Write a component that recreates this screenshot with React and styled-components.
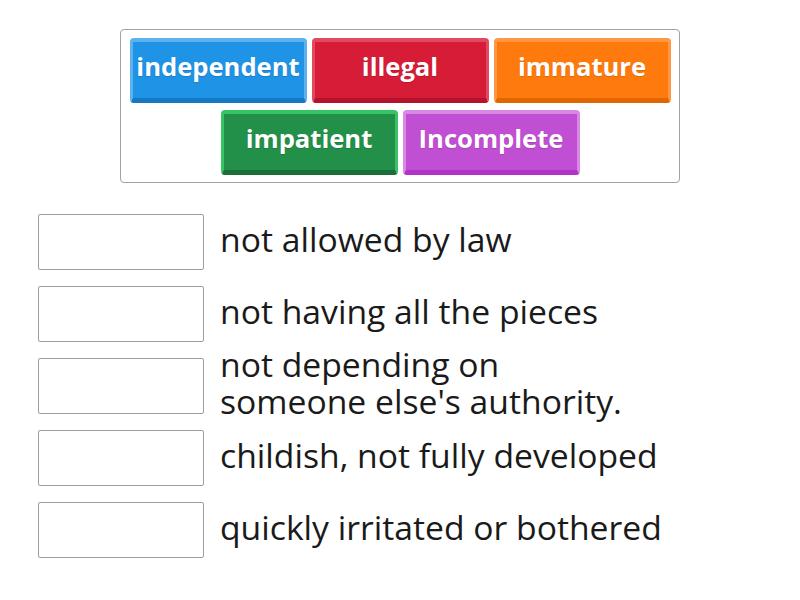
import React from "react";
import styled, { createGlobalStyle } from "styled-components";

const GlobalStyle = createGlobalStyle`
  html, body {
    margin: 0;
    padding: 0;
    background: #ffffff;
    font-family: "Open Sans", "Liberation Sans", sans-serif;
  }
`;

const Page = styled.div`
  width: 800px;
  height: 600px;
  padding-top: 29px;
  box-sizing: border-box;
`;

const Bank = styled.div`
  width: 560px;
  margin-left: 120px;
  box-sizing: border-box;
  border: 1px solid #a3a3a3;
  border-radius: 4px;
  padding: 8px 8px 7px 8px;
  display: flex;
  flex-direction: column;
  align-items: center;
  gap: 7px;
`;

const TileRow = styled.div`
  display: flex;
  gap: 5px;
`;

const Tile = styled.div`
  width: 177px;
  height: 65px;
  box-sizing: border-box;
  border-radius: 4px;
  background: ${({ $c }) => $c.main};
  border: 3px solid ${({ $c }) => $c.light};
  border-top-width: 4px;
  border-bottom: 5px solid ${({ $c }) => $c.dark};
  padding-bottom: 8px;
  color: #ffffff;
  font-weight: 700;
  font-size: 25.6px;
  display: flex;
  align-items: center;
  justify-content: center;
  white-space: nowrap;
  text-shadow: 0 1px 1px rgba(0, 0, 0, 0.15);
`;

const List = styled.div`
  margin-top: 31px;
  display: flex;
  flex-direction: column;
  gap: 16px;
`;

const Row = styled.div`
  height: 56px;
  display: flex;
  align-items: center;
  gap: 16px;
  padding-left: 38px;
`;

const Slot = styled.div`
  width: 166px;
  height: 56px;
  box-sizing: border-box;
  border: 1px solid #9e9e9e;
  border-radius: 2px;
  flex-shrink: 0;
`;

const Clue = styled.div`
  font-size: 33.7px;
  line-height: 37px;
  color: #1a1a1a;
  margin-top: -6px;
  white-space: nowrap;
`;

const colors = {
  blue: { main: "#1f93e6", light: "#5cb2ee", dark: "#1478c2" },
  red: { main: "#d71c37", light: "#e2495f", dark: "#b3132c" },
  orange: { main: "#ff7a0c", light: "#ff9745", dark: "#e06700" },
  green: { main: "#23904a", light: "#36c464", dark: "#1b6e37" },
  purple: { main: "#c14fd3", light: "#d988e4", dark: "#b232c7" },
};

const clues = [
  ["not allowed by law"],
  ["not having all the pieces"],
  ["not depending on", "someone else's authority."],
  ["childish, not fully developed"],
  ["quickly irritated or bothered"],
];

export default function App() {
  return (
    <Page>
      <GlobalStyle />
      <Bank>
        <TileRow>
          <Tile $c={colors.blue}>independent</Tile>
          <Tile $c={colors.red}>illegal</Tile>
          <Tile $c={colors.orange}>immature</Tile>
        </TileRow>
        <TileRow>
          <Tile $c={colors.green}>impatient</Tile>
          <Tile $c={colors.purple}>Incomplete</Tile>
        </TileRow>
      </Bank>
      <List>
        {clues.map((lines, i) => (
          <Row key={i}>
            <Slot />
            <Clue>
              {lines.map((l, j) => (
                <React.Fragment key={j}>
                  {j > 0 && <br />}
                  {l}
                </React.Fragment>
              ))}
            </Clue>
          </Row>
        ))}
      </List>
    </Page>
  );
}
